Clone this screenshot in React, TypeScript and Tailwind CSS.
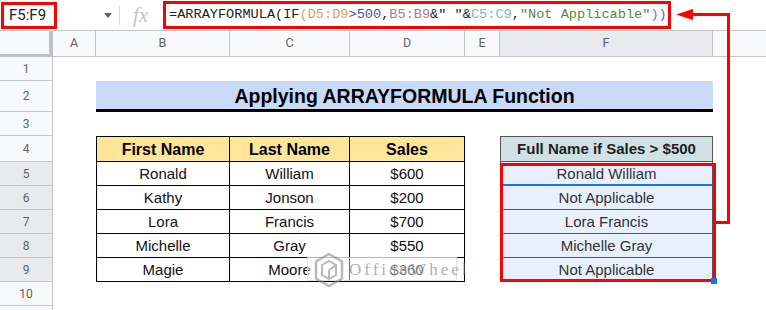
import React from "react";

const sans = "font-['Liberation_Sans',Arial,sans-serif]";
const chrome = "font-['Roboto','Liberation_Sans',sans-serif]";

const people = [
    { first: "Ronald", last: "William", sales: "$600", full: "Ronald William" },
    { first: "Kathy", last: "Jonson", sales: "$200", full: "Not Applicable" },
    { first: "Lora", last: "Francis", sales: "$700", full: "Lora Francis" },
    { first: "Michelle", last: "Gray", sales: "$550", full: "Michelle Gray" },
    { first: "Magie", last: "Moore", sales: "$360", full: "Not Applicable" },
];

function RowHead({ n, selected }: { n?: number; selected?: boolean }) {
    return (
        <div
            className={`w-[53px] shrink-0 h-full flex items-center justify-center border-r border-b border-[#c4c7c5] text-[12px] font-normal text-[#5f6368] ${chrome} ${
                selected ? "bg-[#e8eaed]" : "bg-[#f8f9fa]"
            }`}
        >
            {n}
        </div>
    );
}

function FormulaBar() {
    return (
        <div className="h-[31px] flex items-center border-b border-[#c4c7c5] bg-white">
            {/* Name box */}
            <div className="w-[119px] h-full flex items-center pl-[1px]">
                <div className={`w-[56px] h-[27px] border-[3px] border-[#ff0000] flex items-center pl-[5px] text-[15px] text-[#202124] ${chrome}`}>
                    F5:F9
                </div>
                <svg width="8" height="5" viewBox="0 0 8 5" className="ml-[47px]">
                    <path d="M0 0 L8 0 L4 5 Z" fill="#5f6368" />
                </svg>
            </div>
            <div className="w-px h-[20px] bg-[#dadce0]" />
            <div className="w-[43px] flex items-center pl-[13px] text-[21px] italic text-[#c2c4c7] font-['Liberation_Serif',serif] leading-none">
                fx
            </div>
            {/* Formula box */}
            <div className="w-[508px] h-[28px] border-[3px] border-[#ff0000] flex items-center pl-[3px] text-[13.6px] font-['Liberation_Mono',monospace] whitespace-pre text-[#222]">
                <span>=ARRAYFORMULA(IF</span>
                <span className="text-[#e39a68]">(</span>
                <span className="text-[#e39a68]">D5:D9</span>
                <span className="text-[#4a55a8]">&gt;500</span>
                <span>,</span>
                <span className="text-[#a874b4]">B5:B9</span>
                <span>&amp;" "&amp;</span>
                <span className="text-[#7eb3dc]">C5:C9</span>
                <span>,</span>
                <span className="text-[#4f8a44]">"Not Applicable"</span>
                <span className="text-[#7c74c4]">)</span>
                <span className="text-[#7a5a9c]">)</span>
            </div>
        </div>
    );
}

function ColumnHeader() {
    const cols = [
        { l: "A", w: "w-[43px]" },
        { l: "B", w: "w-[134px]" },
        { l: "C", w: "w-[120px]" },
        { l: "D", w: "w-[115px]" },
        { l: "E", w: "w-[35px]" },
        { l: "F", w: "w-[213px]", sel: true },
    ];
    return (
        <div className={`h-[26px] flex ${chrome} text-[12.5px] text-[#5f6368]`}>
            <div className="w-[53px] shrink-0 h-full bg-[#f8f9fa] border-r-[4px] border-b-[3px] border-[#c0c2c5]" />
            {cols.map((c) => (
                <div
                    key={c.l}
                    className={`${c.w} shrink-0 h-full flex items-center justify-center border-r border-b border-[#c4c7c5] ${
                        c.sel ? "bg-[#e8eaed]" : "bg-[#f8f9fa]"
                    }`}
                >
                    {c.l}
                </div>
            ))}
            <div className="flex-1 h-full bg-[#f8f9fa] border-b border-[#c4c7c5]" />
        </div>
    );
}

export default function App() {
    return (
        <div className="relative w-[766px] h-[310px] overflow-hidden bg-white">
            <FormulaBar />
            <ColumnHeader />

            {/* Row 1 */}
            <div className="h-[24px] flex">
                <RowHead n={1} />
            </div>

            {/* Row 2 - title */}
            <div className="h-[31px] flex">
                <RowHead n={2} />
                <div className="w-[43px] shrink-0" />
                <div
                    className={`w-[617px] shrink-0 h-full bg-[#c9daf8] border-b-[3px] border-black flex items-center justify-center pt-[3px] text-[19.5px] font-bold text-black ${sans}`}
                >
                    Applying ARRAYFORMULA Function
                </div>
            </div>

            {/* Row 3 */}
            <div className="h-[24px] flex">
                <RowHead n={3} />
            </div>

            {/* Row 4 - headers */}
            <div className={`h-[26px] flex ${sans} font-bold text-black`}>
                <RowHead n={4} />
                <div className="w-[43px] shrink-0" />
                <div className="w-[134px] shrink-0 bg-[#ffe599] border border-black flex items-center justify-center pt-[1px] text-[16px]">
                    First Name
                </div>
                <div className="w-[120px] shrink-0 bg-[#ffe599] border-t border-r border-b border-black flex items-center justify-center pt-[1px] text-[16px]">
                    Last Name
                </div>
                <div className="w-[115px] shrink-0 bg-[#ffe599] border-t border-r border-b border-black flex items-center justify-center pt-[1px] text-[16px]">
                    Sales
                </div>
                <div className="w-[35px] shrink-0" />
                <div className="w-[213px] shrink-0 bg-[#d0e0e3] border border-[#555] flex items-center justify-center pt-[1px] text-[15px] text-[#1f1f1f]">
                    Full Name if Sales &gt; $500
                </div>
            </div>

            {/* Rows 5-9 */}
            {people.map((p, i) => (
                <div key={p.first} className={`h-[24px] flex ${sans} text-[15px] text-[#111]`}>
                    <RowHead n={5 + i} selected />
                    <div className="w-[43px] shrink-0" />
                    <div className="w-[134px] shrink-0 border-l border-r border-b border-black flex items-center justify-center pt-[2px]">
                        {p.first}
                    </div>
                    <div className="w-[120px] shrink-0 border-r border-b border-black flex items-center justify-center pt-[2px]">
                        {p.last}
                    </div>
                    <div className="w-[115px] shrink-0 border-r border-b border-black flex items-center justify-center pt-[2px]">
                        {p.sales}
                    </div>
                    <div className="w-[35px] shrink-0" />
                    <div
                        className={`w-[213px] shrink-0 bg-[#e8f0fe] border-l border-r border-[#555] flex items-center justify-center pt-[2px] text-[#333] ${
                            i === 0 ? "border-b-2 border-b-[#1a73e8]" : "border-b"
                        }`}
                    >
                        {p.full}
                    </div>
                </div>
            ))}

            {/* Row 10 */}
            <div className="h-[24px] flex">
                <RowHead n={10} />
            </div>
            <div className="h-[24px] flex">
                <RowHead />
            </div>

            {/* Red highlight around F5:F9 */}
            <div className="absolute left-[500px] top-[163px] w-[216px] h-[119px] border-[3px] border-[#ff0000] pointer-events-none" />
            <div className="absolute left-[711px] top-[278px] w-[6px] h-[6px] bg-[#1a73e8]" />

            {/* Connector arrow */}
            <svg className="absolute inset-0 pointer-events-none" width="766" height="310" viewBox="0 0 766 310">
                <path d="M690 14.5 L728.5 14.5 L728.5 222.5 L715 222.5" fill="none" stroke="#ff0000" strokeWidth="3" />
                <path d="M676 14.5 L693 9 L693 20 Z" fill="#ff0000" />
            </svg>

            {/* Watermark */}
            <div className="absolute left-[307px] top-[257px] w-[150px] h-[24px] bg-white/45 border border-[#d4d4d4]/70 pointer-events-none" />
            <div className="absolute left-[313px] top-[252px] flex items-center gap-[4px] pointer-events-none opacity-60">
                <svg width="32" height="36" viewBox="0 0 32 36">
                    <path d="M16 2 L29 9.5 L29 26.5 L16 34 L3 26.5 L3 9.5 Z" fill="none" stroke="#8c8c8c" strokeWidth="2.5" />
                    <path d="M16 9 L23 13 L23 23 L16 27 L9 23 L9 13 Z" fill="none" stroke="#8c8c8c" strokeWidth="2" />
                    <path d="M16 18 L23 13 M16 18 L16 27" fill="none" stroke="#8c8c8c" strokeWidth="2" />
                </svg>
                <span className="text-[17px] tracking-[3px] text-[#7a7a7a] font-['Liberation_Serif',serif]">OfficeWheel</span>
            </div>
        </div>
    );
}
